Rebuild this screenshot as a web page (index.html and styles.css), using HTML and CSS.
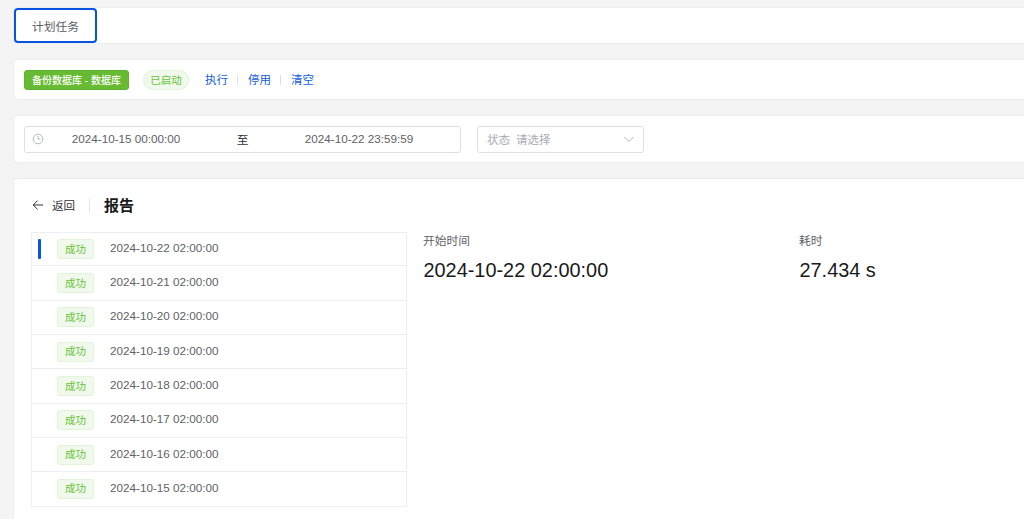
FILE: index.html
```html
<!DOCTYPE html>
<html lang="zh">
<head>
<meta charset="utf-8">
<title>计划任务</title>
<link rel="stylesheet" href="styles.css">
</head>
<body>
<div class="page">
  <div class="card tabs"><div class="tab">计划任务</div></div>
  <div class="card actions">
    <span class="name-tag">备份数据库 - 数据库</span>
    <span class="status-pill">已启动</span>
    <a class="link">执行</a><i class="sep"></i><a class="link">停用</a><i class="sep"></i><a class="link">清空</a>
  </div>
  <div class="card filters">
    <div class="range">
      <svg class="clock" width="12" height="12" viewBox="0 0 12 12" fill="none" stroke="#b4b7bd" stroke-width="1"><circle cx="6" cy="6" r="4.8"/><path d="M6 3v3h2.6"/></svg>
      <span class="range-val">2024-10-15 00:00:00</span>
      <span class="range-sep">至</span>
      <span class="range-val">2024-10-22 23:59:59</span>
    </div>
    <div class="select">
      <span class="select-label">状态</span><span class="select-ph">请选择</span>
      <svg class="chev" width="12" height="12" viewBox="0 0 12 12" fill="none" stroke="#b4b7bd" stroke-width="1"><path d="M1.5 4l4.5 4.5L10.5 4"/></svg>
    </div>
  </div>
  <div class="card report">
    <div class="report-head">
      <svg class="back" width="12" height="12" viewBox="0 0 12 12" fill="none" stroke="#303133" stroke-width="1"><path d="M11 6H1.2M5.6 1.6L1.2 6l4.4 4.4"/></svg>
      <span class="back-text">返回</span>
      <i class="head-sep"></i>
      <h1 class="title">报告</h1>
    </div>
    <div class="report-body">
      <ul class="records">
        <li class="record active"><span class="ok">成功</span><span class="time">2024-10-22 02:00:00</span></li>
        <li class="record"><span class="ok">成功</span><span class="time">2024-10-21 02:00:00</span></li>
        <li class="record"><span class="ok">成功</span><span class="time">2024-10-20 02:00:00</span></li>
        <li class="record"><span class="ok">成功</span><span class="time">2024-10-19 02:00:00</span></li>
        <li class="record"><span class="ok">成功</span><span class="time">2024-10-18 02:00:00</span></li>
        <li class="record"><span class="ok">成功</span><span class="time">2024-10-17 02:00:00</span></li>
        <li class="record"><span class="ok">成功</span><span class="time">2024-10-16 02:00:00</span></li>
        <li class="record"><span class="ok">成功</span><span class="time">2024-10-15 02:00:00</span></li>
      </ul>
      <div class="details">
        <div class="detail detail-start"><div class="detail-label">开始时间</div><div class="detail-value">2024-10-22 02:00:00</div></div>
        <div class="detail"><div class="detail-label">耗时</div><div class="detail-value">27.434 s</div></div>
      </div>
    </div>
  </div>
</div>
</body>
</html>
```
FILE: styles.css
```css
* { box-sizing: border-box; }
html, body { margin: 0; height: 100%; overflow: hidden; }
body {
  background: #f4f4f5;
  font-family: "Liberation Sans", "Noto Sans CJK SC", sans-serif;
  font-size: 11.7px;
  color: #606266;
}
.page {
  width: 1040px;
  margin-left: 14px;
  padding-top: 8px;
  display: flex;
  flex-direction: column;
  gap: 17px;
}
.card {
  background: #fff;
  border-radius: 4px;
  box-shadow: 0 0 2px rgba(60, 70, 110, 0.12);
}
.tabs { height: 35px; display: flex; }
.tab {
  width: 83px;
  height: 35px;
  border: 2px solid #0854e0;
  border-radius: 4px;
  display: flex;
  align-items: center;
  justify-content: center;
  color: #5c5f66;
  font-size: 11.8px;
}
.actions {
  height: 39px;
  padding-left: 10px;
  display: flex;
  align-items: center;
}
.name-tag {
  width: 105px;
  height: 20px;
  border-radius: 3px;
  background: #67bb32;
  border: 1px solid #5fb32c;
  color: #fff;
  font-size: 10px;
  font-weight: 500;
  display: flex;
  align-items: center;
  justify-content: center;
  white-space: nowrap;
}
.status-pill {
  margin-left: 14px;
  width: 46px;
  height: 20px;
  border-radius: 10px;
  background: #f0f9eb;
  border: 1px solid #e1f3d8;
  color: #67c23a;
  font-size: 10.5px;
  display: flex;
  align-items: center;
  justify-content: center;
}
.link { color: #1560d8; font-size: 11.5px; line-height: 16px; }
.status-pill + .link { margin-left: 16px; }
.sep { width: 1px; height: 10px; background: #dcdfe6; margin: 0 10px 0 9px; }
.filters {
  height: 46px;
  padding-left: 10px;
  display: flex;
  align-items: center;
  gap: 16px;
}
.range {
  width: 437px;
  height: 27px;
  border: 1px solid #dcdfe6;
  border-radius: 3px;
  display: flex;
  align-items: center;
  padding-left: 7px;
  color: #606266;
}
.clock { flex: none; }
.range-val { width: 164px; margin-bottom: 2px; text-align: center; white-space: nowrap; }
.range-sep { width: 69px; margin-bottom: 2px; text-align: center; color: #303133; }
.select {
  width: 167px;
  height: 27px;
  border: 1px solid #dcdfe6;
  border-radius: 3px;
  display: flex;
  align-items: center;
  padding: 0 8px 0 9px;
  color: #a8abb2;
  font-size: 11.5px;
}
.select-ph { margin-left: 6px; }
.chev { margin-left: auto; }
.report { height: 360px; padding: 0 17px; }
.report-head {
  height: 52px;
  margin-bottom: 1px;
  display: flex;
  align-items: center;
}
.back { margin-left: 1px; flex: none; }
.back-text { margin-left: 8px; font-size: 11.5px; color: #303133; }
.head-sep { width: 1px; height: 15px; background: #e4e7ed; margin: 0 14px; }
.title { margin: 0 0 2px; font-size: 15px; font-weight: 700; color: #1a1a1a; }
.report-body { display: flex; }
.records {
  list-style: none;
  margin: 0;
  padding: 0;
  width: 376px;
  height: 275px;
  border: 1px solid #ebeef5;
  display: flex;
  flex-direction: column;
}
.record {
  position: relative;
  flex: none;
  height: 34.34px;
  display: flex;
  align-items: center;
  padding-left: 25px;
  border-bottom: 1px solid #ebeef5;
}
.record:first-child { height: 33.49px; }
.record:last-child { height: 33px; border-bottom: 0; }
.record.active::before {
  content: "";
  position: absolute;
  left: 6px;
  top: 6px;
  width: 3px;
  height: 20px;
  border-radius: 1px;
  background: #0854e0;
}
.ok {
  width: 37px;
  height: 20px;
  padding-bottom: 2px;
  border-radius: 3px;
  background: #f0f9eb;
  border: 1px solid #e1f3d8;
  color: #67c23a;
  font-size: 10.5px;
  display: flex;
  align-items: center;
  justify-content: center;
}
.time { margin-left: 16px; margin-bottom: 3px; color: #606266; }
.details { display: flex; padding-left: 16px; padding-top: 1px; }
.detail-start { width: 376px; }
.detail-label { font-size: 11.75px; line-height: 16px; color: #606266; }
.detail-value { margin: 9px 0 0 0.5px; font-size: 19.9px; line-height: 24px; color: #1a1a1a; }
```
